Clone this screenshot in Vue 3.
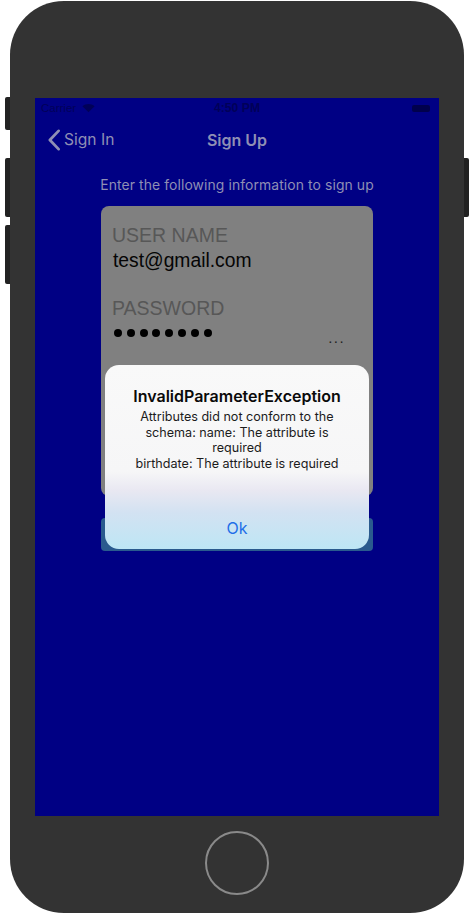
<script setup>
const dots = 8
</script>

<template>
  <div class="stage">
    <div class="phone">
      <span class="side mute"></span>
      <span class="side volup"></span>
      <span class="side voldown"></span>
      <span class="side power"></span>

      <div class="screen">
        <div class="status">
          <span class="carrier">Carrier</span>
          <svg class="wifi" viewBox="0 0 14 10" width="13" height="10">
            <path d="M7 9.6 0.4 3.2C4.2-.2 9.8-.2 13.6 3.2Z" fill="#000058" />
          </svg>
          <span class="time">4:50 PM</span>
          <span class="battery"></span>
        </div>

        <div class="nav">
          <div class="back">
            <svg viewBox="0 0 14 24" width="14" height="22" class="chev">
              <path d="M12 2 2.5 12 12 22" fill="none" stroke="#8f8fb4" stroke-width="3" stroke-linecap="round" stroke-linejoin="round" />
            </svg>
            <span>Sign In</span>
          </div>
          <div class="title">Sign Up</div>
        </div>

        <p class="hint">Enter the following information to sign up</p>

        <div class="card">
          <div class="label">USER NAME</div>
          <div class="value">test@gmail.com</div>
          <div class="label second">PASSWORD</div>
          <div class="password-row">
            <div class="dots">
              <i v-for="n in dots" :key="n"></i>
            </div>
            <span class="more">...</span>
          </div>
        </div>

        <div class="submit"></div>
      </div>

      <div class="home"></div>

      <div class="alert">
        <div class="alert-title">InvalidParameterException</div>
        <div class="alert-msg">
          Attributes did not conform to the<br />
          schema: name: The attribute is<br />
          required<br />
          birthdate: The attribute is required
        </div>
        <div class="alert-ok">Ok</div>
      </div>
    </div>
  </div>
</template>

<style>
html, body { margin: 0; background: #fff; }
</style>

<style scoped>
.stage {
  width: 474px;
  height: 914px;
  padding: 1px 10px 1px;
  box-sizing: border-box;
  overflow: hidden;
  font-family: "Liberation Sans", Arial, sans-serif;
}
.phone {
  position: relative;
  width: 454px;
  height: 912px;
  background: #333333;
  border-radius: 54px;
  display: flex;
  flex-direction: column;
  align-items: center;
  padding-top: 97px;
  box-sizing: border-box;
}
.side {
  position: absolute;
  width: 5px;
  background: #222222;
  border-radius: 2px 0 0 2px;
}
.mute { left: -5px; top: 96px; height: 33px; }
.volup { left: -5px; top: 157px; height: 59px; }
.voldown { left: -5px; top: 224px; height: 59px; }
.power { right: -5px; top: 157px; height: 59px; border-radius: 0 2px 2px 0; }

.screen {
  width: 404px;
  height: 718px;
  background: #000084;
  display: flex;
  flex-direction: column;
  align-items: center;
  color: #8f8fb4;
}
.status {
  align-self: stretch;
  height: 20px;
  display: flex;
  align-items: center;
  position: relative;
  padding: 0 9px 0 6px;
  font-size: 11.5px;
  color: #000058;
}
.carrier { margin-right: 6px; }
.wifi { flex: none; }
.time {
  position: absolute;
  left: 0;
  right: 0;
  text-align: center;
  font-size: 12.2px;
  font-weight: 700;
}
.battery {
  margin-left: auto;
  width: 18px;
  height: 7px;
  background: #00004c;
  border-radius: 2px;
}
.nav {
  align-self: stretch;
  height: 43px;
  position: relative;
  display: flex;
  align-items: center;
  justify-content: center;
  font-family: Inter, "Liberation Sans", sans-serif;
}
.back {
  position: absolute;
  left: 12px;
  top: 0;
  bottom: 0;
  display: flex;
  align-items: center;
  gap: 3px;
  font-size: 15.6px;
}
.title {
  font-size: 16px;
  font-weight: 600;
}
.hint {
  margin: 15px 0 0;
  font-family: Inter, "Liberation Sans", sans-serif;
  font-size: 13.9px;
  line-height: 18px;
  letter-spacing: 0.1px;
}
.card {
  margin-top: 12px;
  width: 272px;
  height: 290px;
  box-sizing: border-box;
  padding: 17px 12px 0 11px;
  background: #808080;
  border-radius: 8px;
  color: #000;
}
.label {
  font-size: 19.5px;
  line-height: 24px;
  color: #575757;
}
.value {
  font-size: 19.3px;
  line-height: 26px;
  color: #050505;
  padding: 1px 0 0 1px;
}
.second { margin-top: 22px; }
.password-row {
  display: flex;
  align-items: flex-start;
  justify-content: space-between;
  margin-top: 6px;
}
.dots {
  display: flex;
  gap: 4.8px;
  padding: 3px 0 0 2px;
}
.dots i {
  width: 8px;
  height: 8px;
  border-radius: 50%;
  background: #000;
}
.more {
  font-size: 15px;
  line-height: 20px;
  letter-spacing: 1.4px;
  margin: 2px 16px 0 0;
  color: #222;
}
.submit {
  margin-top: 22px;
  width: 272px;
  height: 33px;
  background: #2a5a8e;
  border-radius: 4px;
}

.home {
  width: 64px;
  height: 64px;
  box-sizing: border-box;
  margin-top: 15px;
  border: 2px solid #8a8a8a;
  border-radius: 50%;
}

.alert {
  position: absolute;
  left: 95px;
  top: 364px;
  width: 264px;
  height: 184px;
  box-sizing: border-box;
  padding-top: 21px;
  border-radius: 14px;
  background: linear-gradient(180deg, #f9f9f9 0%, #f6f6f7 58%, #e9e8f2 68%, #d3e2f2 80%, #bde6f5 100%);
  text-align: center;
  color: #111;
  font-family: Inter, "Liberation Sans", sans-serif;
  display: flex;
  flex-direction: column;
}
.alert-title {
  font-size: 16px;
  font-weight: 600;
  line-height: 20px;
  color: #0a0a0a;
}
.alert-msg {
  margin-top: 3px;
  font-size: 12.6px;
  line-height: 15.5px;
  color: #1c1c1c;
}
.alert-ok {
  margin-top: auto;
  height: 42px;
  line-height: 42px;
  font-size: 16px;
  color: #1f6fe8;
}
</style>
